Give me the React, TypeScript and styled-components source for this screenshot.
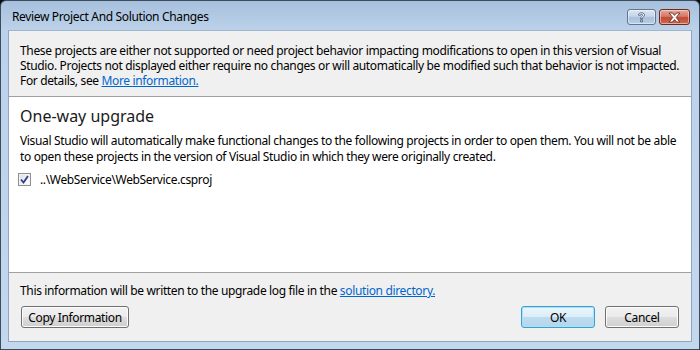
import React, { useState } from 'react';
import styled, { createGlobalStyle } from 'styled-components';

const GlobalStyle = createGlobalStyle`
  html, body {
    margin: 0;
    padding: 0;
    background: #0b0b0b;
  }
  body {
    font-family: 'Noto Sans', 'Liberation Sans', sans-serif;
    font-size: 12px;
    letter-spacing: -0.35px;
    color: #000;
  }
`;

const Window = styled.div`
  box-sizing: border-box;
  width: 700px;
  height: 350px;
  display: flex;
  flex-direction: column;
  padding: 0 7px 7px 7px;
  border: 1px solid #3c4b5e;
  border-radius: 6px 6px 0 0;
  background: linear-gradient(180deg, #a7c0dc 0px, #bcd2ea 30px, #c3d7ed 100%);
`;

const TitleBar = styled.div`
  height: 29px;
  display: flex;
  align-items: center;
  justify-content: space-between;
  padding-left: 4px;
`;

const Title = styled.span`
  font-size: 12px;
  color: #000;
  margin-top: 2px;
  white-space: nowrap;
`;

const CaptionButtons = styled.div`
  display: flex;
  gap: 3px;
  margin-top: 3px;
  margin-right: 2px;
`;

const CaptionButton = styled.div<{ $variant: 'help' | 'close' }>`
  box-sizing: border-box;
  width: ${p => (p.$variant === 'close' ? 31 : 29)}px;
  height: 16px;
  display: flex;
  align-items: center;
  justify-content: center;
  border: 1px solid ${p => (p.$variant === 'close' ? '#6d2a21' : '#5f7592')};
  border-radius: 3px;
  background: ${p =>
    p.$variant === 'close'
      ? 'linear-gradient(180deg, #e8a597 0%, #d47a68 45%, #c14a33 55%, #d16a50 100%)'
      : 'linear-gradient(180deg, #dbe6f3 0%, #c4d4e8 45%, #a8bfdb 55%, #bad0e9 100%)'};
  box-shadow: inset 0 0 0 1px rgba(255, 255, 255, 0.45);
`;

const Client = styled.div`
  flex: 1;
  display: flex;
  flex-direction: column;
  background: #f0f0f0;
  border: 1px solid #8ea6c2;
  border-top-color: #9fb6d0;
`;

const InfoSection = styled.div`
  padding: 12px 12px 8px 11px;
  line-height: 15px;
  white-space: nowrap;
`;

const Link = styled.a`
  color: #0066cc;
  text-decoration: underline;
  cursor: pointer;
`;

const MainSection = styled.div`
  flex: 1;
  background: #fff;
  border-top: 1px solid #a0a0a0;
  border-bottom: 1px solid #a0a0a0;
  padding: 9px 12px 0 11px;
`;

const Heading = styled.div`
  font-size: 16px;
  line-height: 21px;
  letter-spacing: 0;
  color: #1a1a1a;
  margin-bottom: 6px;
`;

const Paragraph = styled.div`
  line-height: 16px;
  white-space: nowrap;
`;

const ProjectRow = styled.label`
  display: flex;
  align-items: center;
  gap: 9px;
  margin-top: 6px;
  margin-left: -2px;
  cursor: pointer;
`;

const CheckBox = styled.span`
  box-sizing: border-box;
  width: 13px;
  height: 13px;
  display: inline-flex;
  align-items: center;
  justify-content: center;
  border: 1px solid #8e8f8f;
  background: linear-gradient(135deg, #dcdcdc 0%, #f4f4f4 60%, #ffffff 100%);
  box-shadow: inset 0 0 0 1px #f4f4f4;
`;

const Footer = styled.div`
  height: 68px;
  box-sizing: border-box;
  padding: 10px 12px 0 11px;
  display: flex;
  flex-direction: column;
  gap: 8px;
  line-height: 15px;
  white-space: nowrap;
`;

const ButtonRow = styled.div`
  display: flex;
  align-items: center;
  gap: 10px;
  padding-left: 1px;
`;

const Spacer = styled.div`
  flex: 1;
`;

const Button = styled.button<{ $width: number; $default?: boolean }>`
  box-sizing: border-box;
  width: ${p => p.$width}px;
  height: 22px;
  padding: 0;
  font-family: inherit;
  font-size: 12px;
  letter-spacing: inherit;
  color: #000;
  border: 1px solid ${p => (p.$default ? '#3d9fd0' : '#707070')};
  border-radius: 3px;
  background: ${p =>
    p.$default
      ? 'linear-gradient(180deg, #eaf6fc 0%, #dcedf8 48%, #bcdcf0 52%, #b4d6ec 100%)'
      : 'linear-gradient(180deg, #f2f2f2 0%, #ebebeb 48%, #dddddd 52%, #cfcfcf 100%)'};
  box-shadow: inset 0 0 0 1px ${p => (p.$default ? '#a6e2f8' : '#fcfcfc')};
  cursor: pointer;
`;

export default function App() {
  const [checked, setChecked] = useState(true);

  return (
    <>
      <GlobalStyle />
      <Window>
        <TitleBar>
          <Title>Review Project And Solution Changes</Title>
          <CaptionButtons>
            <CaptionButton $variant="help">
              <svg width="9" height="11" viewBox="0 0 9 11">
                <path
                  d="M1.5 3.2 C1.5 1.5 2.8 0.8 4.5 0.8 C6.3 0.8 7.5 1.7 7.5 3.1 C7.5 4.5 5.4 4.9 5.4 6.6 L3.6 6.6 C3.6 4.6 5.6 4.2 5.6 3.2 C5.6 2.6 5.1 2.3 4.5 2.3 C3.8 2.3 3.4 2.7 3.4 3.3 Z M3.6 7.8 L5.4 7.8 L5.4 9.8 L3.6 9.8 Z"
                  fill="#fff"
                  stroke="#3d4d63"
                  strokeWidth="0.8"
                />
              </svg>
            </CaptionButton>
            <CaptionButton $variant="close">
              <svg width="13" height="11" viewBox="0 0 13 11">
                <path
                  d="M1.2 1 L4.4 1 L6.5 3.4 L8.6 1 L11.8 1 L8.2 5.5 L11.8 10 L8.6 10 L6.5 7.6 L4.4 10 L1.2 10 L4.8 5.5 Z"
                  fill="#fff"
                  stroke="#5a2018"
                  strokeWidth="0.8"
                />
              </svg>
            </CaptionButton>
          </CaptionButtons>
        </TitleBar>
        <Client>
          <InfoSection>
            These projects are either not supported or need project behavior impacting modifications to open in this version of Visual
            <br />
            Studio. Projects not displayed either require no changes or will automatically be modified such that behavior is not impacted.
            <br />
            For details, see <Link>More information.</Link>
          </InfoSection>
          <MainSection>
            <Heading>One-way upgrade</Heading>
            <Paragraph>
              Visual Studio will automatically make functional changes to the following projects in order to open them. You will not be able
              <br />
              to open these projects in the version of Visual Studio in which they were originally created.
            </Paragraph>
            <ProjectRow onClick={() => setChecked(!checked)}>
              <CheckBox>
                {checked && (
                  <svg width="9" height="9" viewBox="0 0 9 9">
                    <path d="M1 4.5 L3.5 7.5 L8 1" fill="none" stroke="#2b3f8c" strokeWidth="1.8" />
                  </svg>
                )}
              </CheckBox>
              <span>..\WebService\WebService.csproj</span>
            </ProjectRow>
          </MainSection>
          <Footer>
            <div>
              This information will be written to the upgrade log file in the <Link>solution directory.</Link>
            </div>
            <ButtonRow>
              <Button $width={108}>Copy Information</Button>
              <Spacer />
              <Button $width={74} $default>
                OK
              </Button>
              <Button $width={74}>Cancel</Button>
            </ButtonRow>
          </Footer>
        </Client>
      </Window>
    </>
  );
}
